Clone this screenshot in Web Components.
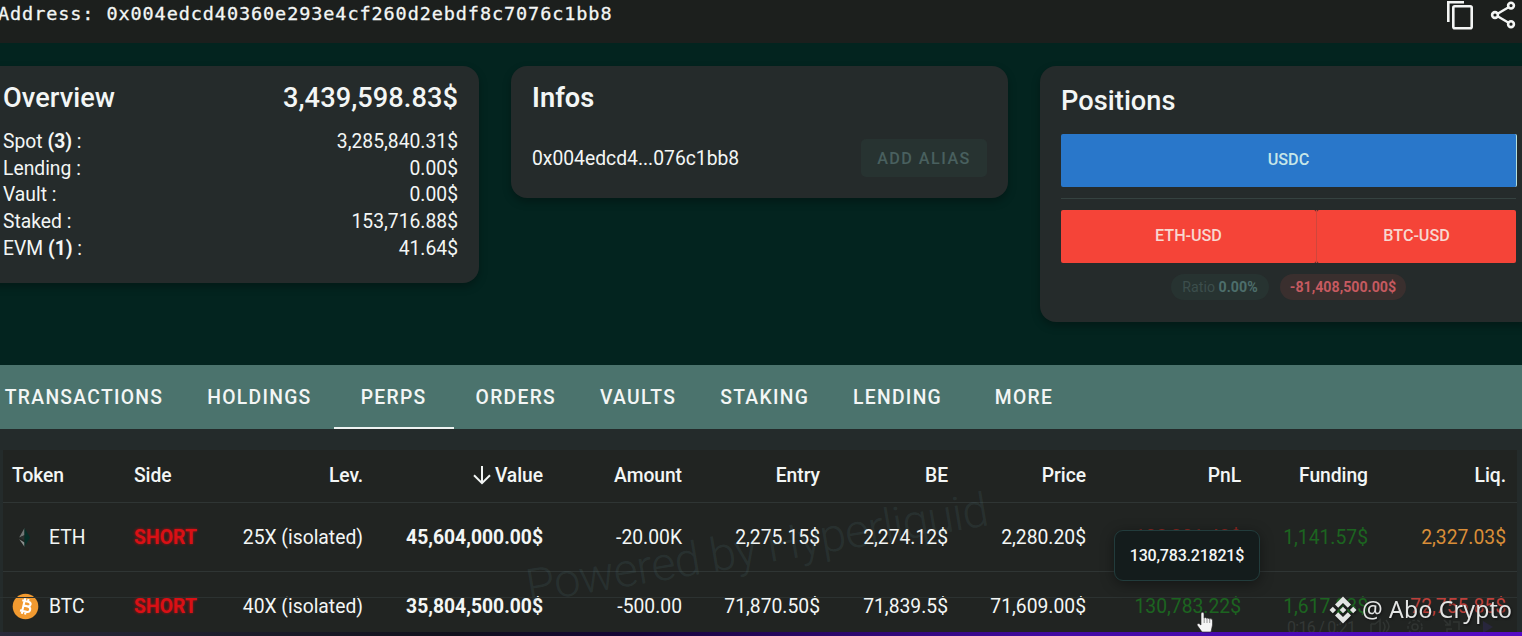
<!DOCTYPE html>
<html lang="en">
<head>
<meta charset="utf-8">
<title>Address overview</title>
<style>
html, body {
  margin: 0;
  height: 636px;
  overflow: hidden;
}
body {
  background: #03241f;
  color: #f3f6f5;
  font-family: Roboto, "Liberation Sans", sans-serif;
  font-size: 19.3px;
  letter-spacing: 0.01px;
}
</style>
</head>
<body>
<wallet-page></wallet-page>

<script>
function attach(el, html) {
  const template = document.createElement("template");
  template.innerHTML = html;
  el.attachShadow({ mode: "open" });
  el.shadowRoot.appendChild(template.content.cloneNode(true));
}

class AddressBar extends HTMLElement {
  constructor() {
    super();
    attach(this, `
<style>
:host {
  display: flex;
  justify-content: space-between;
  align-items: flex-start;
  height: 43px;
  box-sizing: border-box;
  padding-right: 1px;
  background: #1c1f1d;
}
.address {
  margin: 1px 0 0 -2px;
  font: 18.5px/26px "DejaVu Sans Mono", monospace;
  letter-spacing: 0.91px;
  white-space: pre;
  -webkit-text-stroke: 0.3px #f3f6f5;
}
.icons {
  display: flex;
  gap: 13px;
  margin-top: -1px;
}
svg { display: block; fill: none; stroke: #f3f5f4; stroke-width: 2.6; }
</style>
<div class="address"><slot></slot></div>
<div class="icons">
  <svg width="32" height="32" viewBox="0 0 32 32"><path d="M4.3 23V3.2H20"/><rect x="9.3" y="7.3" width="18.4" height="22" rx="1.5"/></svg>
  <svg width="32" height="32" viewBox="0 0 32 32"><path d="M9 14.5 20 8M9 17.5 20 24" stroke-width="2.4"/><circle cx="6" cy="16" r="2.9"/><circle cx="22" cy="6.6" r="2.9"/><circle cx="22" cy="25.2" r="2.9"/></svg>
</div>`);
  }
}
customElements.define("address-bar", AddressBar);

class InfoCard extends HTMLElement {
  constructor() {
    super();
    attach(this, `
<style>
:host {
  display: block;
  box-sizing: border-box;
  padding: 16px 21px;
  border-radius: 16px;
  background: #252b2b;
  box-shadow: 0 4px 9px rgba(0, 0, 0, 0.28);
}
header {
  display: flex;
  justify-content: space-between;
  font-size: 27.2px;
  font-weight: var(--title-weight, 500);
  letter-spacing: 0.06px;
  line-height: 32px;
}
</style>
<header><slot name="title"></slot><slot name="total"></slot></header>
<slot></slot>`);
  }
}
customElements.define("info-card", InfoCard);

class BalanceRow extends HTMLElement {
  constructor() {
    super();
    attach(this, `
<style>
:host {
  display: flex;
  justify-content: space-between;
  line-height: 26.7px;
}
b { font-weight: 700; }
</style>
<span>${this.getAttribute("label")} ${this.hasAttribute("count") ? "<b>(" + this.getAttribute("count") + ")</b> " : ""}:</span>
<span><slot></slot></span>`);
  }
}
customElements.define("balance-row", BalanceRow);

class AliasRow extends HTMLElement {
  constructor() {
    super();
    attach(this, `
<style>
:host {
  display: flex;
  justify-content: space-between;
  align-items: center;
  margin-top: 25px;
}
button {
  width: 126px;
  height: 38px;
  padding: 0;
  border: 0;
  border-radius: 5px;
  background: #273331;
  color: #49605f;
  font: 500 16.2px Roboto, sans-serif;
  letter-spacing: 1.45px;
}
</style>
<span><slot></slot></span>
<button>ADD ALIAS</button>`);
  }
}
customElements.define("alias-row", AliasRow);

class PositionBar extends HTMLElement {
  constructor() {
    super();
    attach(this, `
<style>
:host {
  display: flex;
  align-items: center;
  justify-content: center;
  box-sizing: border-box;
  height: 53px;
  padding-bottom: 2px;
  border-radius: 2px;
  background: var(--bar, #f54438);
  color: var(--ink, #f8d8d0);
  font-size: 16.2px;
  font-weight: 500;
  letter-spacing: -0.05px;
}
</style>
<slot></slot>`);
  }
}
customElements.define("position-bar", PositionBar);

class PositionsPanel extends HTMLElement {
  constructor() {
    super();
    attach(this, `
<style>
:host { display: block; }
.usdc {
  --bar: #2977ca;
  --ink: #c7e6e8;
  margin-top: 17px;
  margin-right: -1px;
  border-right: 1px solid #b5dedd;
}
hr { height: 1px; margin: 11px 0; border: 0; background: #354240; }
.perps {
  display: grid;
  grid-template-columns: 255px 199px;
  gap: 1px;
  background: linear-gradient(#cf463c, #cf463c) 255px 0 / 1px 100% no-repeat;
}
.chips {
  display: flex;
  justify-content: center;
  gap: 11px;
  margin-top: 11px;
  font-size: 14.2px;
  line-height: 26px;
}
.chips span {
  box-sizing: border-box;
  height: 26px;
  border-radius: 13px;
  text-align: center;
}
.ratio { width: 98px; background: #273331; color: #3c4e4c; }
.ratio b { color: #4d6e6b; }
.delta { width: 126px; background: #3a2f2e; color: #c65a60; font-weight: 700; }
</style>
<position-bar class="usdc">USDC</position-bar>
<hr>
<div class="perps"><position-bar>ETH-USD</position-bar><position-bar>BTC-USD</position-bar></div>
<div class="chips"><span class="ratio">Ratio <b>0.00%</b></span><span class="delta">-81,408,500.00$</span></div>`);
  }
}
customElements.define("positions-panel", PositionsPanel);

class TabBar extends HTMLElement {
  constructor() {
    super();
    const tabs = ["TRANSACTIONS", "HOLDINGS", "PERPS", "ORDERS", "VAULTS", "STAKING", "LENDING", "MORE"];
    attach(this, `
<style>
:host {
  display: flex;
  height: 64px;
  background: #4b736d;
}
span {
  box-sizing: border-box;
  min-width: 120px;
  padding: 0 22px;
  border-bottom: 2px solid transparent;
  font-weight: 500;
  letter-spacing: 1.3px;
  line-height: 65px;
  text-align: center;
}
span:first-of-type { margin-left: -17.2px; }
.active { border-bottom-color: #eef3f2; }
</style>
${tabs.map(t => `<span class="${t === "PERPS" ? "active" : ""}">${t}</span>`).join("")}`);
  }
}
customElements.define("tab-bar", TabBar);

class TokenIcon extends HTMLElement {
  constructor() {
    super();
    const icons = {
      ETH: `<path d="M12.5 4 7.2 13.6l5.3-2.4z" fill="#737877"/><path d="m12.5 11.2-5.3 2.4 5.3 3z" fill="#29302e"/><path d="m7.2 15.2 5.3 7.6v-4.4z" fill="#8b8f8e"/><path d="m12.5 4 5.5 9.6-5.5 9.2z" fill="#062e27"/>`,
      BTC: `<circle cx="13.5" cy="13.5" r="12.8" fill="#f29a30"/><g transform="rotate(13 13.5 13.5)" fill="none" stroke="#fff" stroke-width="2.1"><path d="M9 8.2h6c4 0 4 4.7 0 4.7h-4M11 13h4.6c4.2 0 4.2 5.5 0 5.5H9M11.3 8v10.5M11.5 5.5V8M14.8 5.5V8M11.5 18.5v2.8M14.8 18.5v2.8"/></g>`
    };
    attach(this, `
<style>
:host { display: inline-block; width: 27px; height: 27px; }
svg { display: block; }
</style>
<svg width="27" height="27" viewBox="0 0 27 27">${icons[this.getAttribute("name")]}</svg>`);
  }
}
customElements.define("token-icon", TokenIcon);

class PerpsTable extends HTMLElement {
  constructor() {
    super();
    const heads = ["Token", "Side", "Lev.", "Value", "Amount", "Entry", "BE", "Price", "PnL", "Funding", "Liq."];
    const rows = [
      ["ETH", "SHORT", "25X (isolated)", "45,604,000.00$", "-20.00K", "2,275.15$", "2,274.12$", "2,280.20$", "-102,201.43$", "1,141.57$", "2,327.03$"],
      ["BTC", "SHORT", "40X (isolated)", "35,804,500.00$", "-500.00", "71,870.50$", "71,839.5$", "71,609.00$", "130,783.22$", "1,617.23$", "72,755.85$"]
    ];
    const arrow = `<svg width="20" height="20" viewBox="0 0 20 20"><path d="M10 1v17M2 10.2l8 8 8-8" fill="none" stroke="#f3f6f5" stroke-width="2"/></svg>`;
    attach(this, `
<style>
:host {
  display: block;
  height: 182px;
  margin: 21px 5px 0 3px;
  overflow: hidden;
  background: #212422;
}
.row {
  display: grid;
  grid-template-columns: 122px 95px 134px 180px 139px 138px 128px 138px 155px 127px 138px;
  align-items: center;
  box-sizing: border-box;
  height: 69px;
  padding-left: 9px;
  border-bottom: 1px solid #2f3534;
  text-align: right;
  white-space: nowrap;
}
.row:last-of-type { border-bottom: 0; }
.head { height: 53px; padding-bottom: 1px; font-weight: 500; letter-spacing: -0.05px; }
.head svg { vertical-align: -3px; margin-right: 3px; }
.row > :nth-child(-n+2) { text-align: left; }
.token { display: flex; align-items: center; gap: 10px; }
.side { color: #d91015; font-weight: 700; letter-spacing: 0.1px; text-shadow: 0 0 3px #b80d10; }
.value { font-weight: 700; }
.up { color: #1c6420; }
.down { color: #8d2721; }
.warn { color: #d98e38; }
.liq { color: #bd403b; }
</style>
<div class="row head">${heads.map(h => `<span>${h === "Value" ? arrow : ""}${h}</span>`).join("")}</div>
${rows.map((r, i) => `<div class="row">
  <span class="token"><token-icon name="${r[0]}"></token-icon>${r[0]}</span>
  <span class="side">${r[1]}</span>
  <span>${r[2]}</span>
  <span class="value">${r[3]}</span>
  ${r.slice(4, 8).map(c => `<span>${c}</span>`).join("")}
  <span class="${i ? "up" : "down"}">${r[8]}</span>
  <span class="up">${r[9]}</span>
  <span class="${i ? "liq" : "warn"}">${r[10]}</span>
</div>`).join("")}`);
  }
}
customElements.define("perps-table", PerpsTable);

class ValueTooltip extends HTMLElement {
  constructor() {
    super();
    attach(this, `
<style>
:host {
  position: absolute;
  left: 1114px;
  top: 530px;
  box-sizing: border-box;
  width: 146px;
  height: 51px;
  border: 1px solid #223c3c;
  border-radius: 9px;
  background: #141c1c;
  box-shadow: 0 3px 14px rgba(0, 0, 0, 0.4);
  font-size: 16px;
  font-weight: 500;
  letter-spacing: -0.2px;
  line-height: 49px;
  text-align: center;
}
</style>
<slot></slot>`);
  }
}
customElements.define("value-tooltip", ValueTooltip);

// Everything that floats above the table: chart credit, player controls, pointer, author tag
class PageOverlay extends HTMLElement {
  constructor() {
    super();
    attach(this, `
<style>
:host { position: absolute; inset: 0; pointer-events: none; }
svg { display: block; }
text { letter-spacing: 0; }
</style>
<svg width="1522" height="636" viewBox="0 0 1522 636">
  <defs>
    <linearGradient id="progress">
      <stop offset="0" stop-color="#292a3a"/>
      <stop offset="0.3" stop-color="#11101c"/>
      <stop offset="0.42" stop-color="#160538"/>
      <stop offset="0.7" stop-color="#430aa5"/>
      <stop offset="1" stop-color="#560bc5"/>
    </linearGradient>
  </defs>
  <text transform="translate(529 603) rotate(-9.6)" font-size="47" font-weight="300" textLength="468" fill="#5d8790" fill-opacity="0.14">Powered by Hyperliquid</text>
  <path d="M0 597.5H1517" stroke="#2c3231"/>
  <g fill="none" stroke="#303432" stroke-width="1.6">
    <text x="1287" y="633" font-size="16" textLength="69" fill="#343836" stroke="none">0:16 / 0:21</text>
    <path d="M1371 624h4l5-4v13M1371 624v8M1383 622q4 5 0 10M1386 620q6 7 0 12"/>
    <circle cx="1415" cy="627" r="3"/><circle cx="1415" cy="627" r="7" stroke-dasharray="3 2"/>
    <path d="M1444 620l5 5M1445 625h5v-5M1453 622h6v8M1447 632v-3h5"/>
  </g>
  <path d="M1483 621v12l10-6z" fill="#28263c"/>
  <rect y="632" width="1522" height="4" fill="url(#progress)"/>
  <path d="M1201 613q1.5-1.5 3 0v5q1.5-1 2.6.3 1.5-.8 2.6.5 2-.7 3.3 1.2v5l-1.5 7h-9l-5-7q0-2 2-1.5l2 1.5z" fill="#f5f5f5" stroke="#222" stroke-width="0.6"/>
  <path d="M1204.2 618v5M1207 618.5v4.5M1209.7 619v4" stroke="#555" stroke-width="0.6"/>
  <g style="filter: drop-shadow(1px 1px 1px #111)" fill="#e3e5e4">
    <path d="m1343 596.5 8 8-3.2 3.2-4.8-4.8-4.8 4.8-3.2-3.2z"/>
    <path d="m1343 623.5 8-8-3.2-3.2-4.8 4.8-4.8-4.8-3.2 3.2z"/>
    <path d="m1343 606.7 3.3 3.3-3.3 3.3-3.3-3.3z"/>
    <path d="m1332.8 606.7 3.3 3.3-3.3 3.3-3.3-3.3z"/>
    <path d="m1353.2 606.7 3.3 3.3-3.3 3.3-3.3-3.3z"/>
    <text x="1362" y="618" font-family="Noto Sans, sans-serif" font-size="23" textLength="150">@ Abo Crypto</text>
  </g>
</svg>`);
  }
}
customElements.define("page-overlay", PageOverlay);

class WalletPage extends HTMLElement {
  constructor() {
    super();
    attach(this, `
<style>
:host {
  display: block;
  position: relative;
  width: 1522px;
  height: 636px;
  overflow: hidden;
}
.cards {
  display: grid;
  grid-template-columns: 497px 497px 497px;
  gap: 32px;
  align-items: start;
  height: 322px;
  box-sizing: border-box;
  padding-top: 23px;
  margin-left: -18px;
}
.overview { height: 217px; }
.overview balance-row:first-of-type { margin-top: 15px; }
.infos { --title-weight: 600; height: 132px; }
.positions { height: 256px; padding-top: 19px; }
.table { height: 207px; background: #242b2b; display: flow-root; }
</style>
<address-bar>Address: 0x004edcd40360e293e4cf260d2ebdf8c7076c1bb8</address-bar>
<div class="cards">
  <info-card class="overview">
    <span slot="title">Overview</span><span slot="total">3,439,598.83$</span>
    <balance-row label="Spot" count="3">3,285,840.31$</balance-row>
    <balance-row label="Lending">0.00$</balance-row>
    <balance-row label="Vault">0.00$</balance-row>
    <balance-row label="Staked">153,716.88$</balance-row>
    <balance-row label="EVM" count="1">41.64$</balance-row>
  </info-card>
  <info-card class="infos">
    <span slot="title">Infos</span>
    <alias-row>0x004edcd4...076c1bb8</alias-row>
  </info-card>
  <info-card class="positions">
    <span slot="title">Positions</span>
    <positions-panel></positions-panel>
  </info-card>
</div>
<tab-bar></tab-bar>
<div class="table"><perps-table></perps-table></div>
<page-overlay></page-overlay>
<value-tooltip>130,783.21821$</value-tooltip>`);
  }
}
customElements.define("wallet-page", WalletPage);
</script>
</body>
</html>
